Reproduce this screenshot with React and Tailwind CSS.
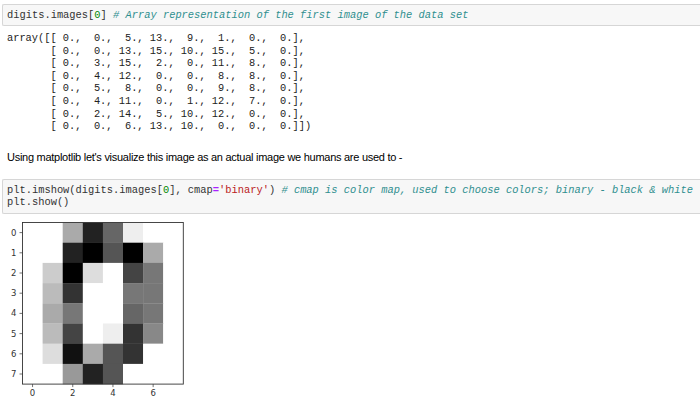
const rows = [
  [0,0,5,13,9,1,0,0],
  [0,0,13,15,10,15,5,0],
  [0,3,15,2,0,11,8,0],
  [0,4,12,0,0,8,8,0],
  [0,5,8,0,0,9,8,0],
  [0,4,11,0,1,12,7,0],
  [0,2,14,5,10,12,0,0],
  [0,0,6,13,10,0,0,0],
];

function Chart() {
  const cw = 20.1, ch = 20.2, l = 22.5, t = 7.5;
  const grey = (v) => {
    const g = Math.round(255 * (1 - v / 15));
    return `rgb(${g},${g},${g})`;
  };
  return (
    <svg width="200" height="190" viewBox="0 0 200 190" className="block">
      {rows.map((r, y) =>
        r.map((v, x) => (
          <rect key={`${x}-${y}`} x={l + x * cw} y={t + y * ch} width={cw + 0.2} height={ch + 0.2} fill={grey(v)} />
        ))
      )}
      <rect x={l} y={t} width={cw * 8} height={ch * 8} fill="none" stroke="#333" strokeWidth="0.9" />
      {[0,1,2,3,4,5,6,7].map((i) => (
        <g key={i}>
          <line x1={l - 3} x2={l} y1={t + (i + 0.5) * ch} y2={t + (i + 0.5) * ch} stroke="#333" strokeWidth="0.7" />
          <text x={l - 6} y={t + (i + 0.5) * ch + 3} textAnchor="end" fontSize="8.5" fill="#333" fontFamily="DejaVu Sans, sans-serif">{i}</text>
        </g>
      ))}
      {[0,2,4,6].map((i) => (
        <g key={i}>
          <line y1={t + ch * 8} y2={t + ch * 8 + 3} x1={l + (i + 0.5) * cw} x2={l + (i + 0.5) * cw} stroke="#333" strokeWidth="0.7" />
          <text x={l + (i + 0.5) * cw} y={t + ch * 8 + 11.5} textAnchor="middle" fontSize="8.5" fill="#333" fontFamily="DejaVu Sans, sans-serif">{i}</text>
        </g>
      ))}
    </svg>
  );
}

export default function App() {
  return (
    <div className="w-[700px] h-[408px] overflow-hidden bg-white pt-[4px] font-['Liberation_Mono',monospace] text-[10.4px] leading-[12.6px] text-[#333]">
      <div className="ml-[2px] h-[22px] border-y border-l border-[#d6d6d6] bg-[#f7f7f7] pl-[4px] pt-[4px] rounded-l-[2px] whitespace-pre">
        <span>digits.images[</span><span className="text-[#080]">0</span><span>] </span>
        <span className="italic text-[#2f8f8f]"># Array representation of the first image of the data set</span>
      </div>
      <pre className="ml-[7px] mt-[6px] font-['Liberation_Mono',monospace] text-[10.35px] text-[#222]">{`array([[ 0.,  0.,  5., 13.,  9.,  1.,  0.,  0.],
       [ 0.,  0., 13., 15., 10., 15.,  5.,  0.],
       [ 0.,  3., 15.,  2.,  0., 11.,  8.,  0.],
       [ 0.,  4., 12.,  0.,  0.,  8.,  8.,  0.],
       [ 0.,  5.,  8.,  0.,  0.,  9.,  8.,  0.],
       [ 0.,  4., 11.,  0.,  1., 12.,  7.,  0.],
       [ 0.,  2., 14.,  5., 10., 12.,  0.,  0.],
       [ 0.,  0.,  6., 13., 10.,  0.,  0.,  0.]])`}</pre>
      <p className="ml-[7px] mt-[16px] font-['Liberation_Sans',sans-serif] text-[11px] leading-[16px] tracking-[-0.27px] text-black">Using matplotlib let's visualize this image as an actual image we humans are used to -</p>
      <div className="ml-[2px] mt-[14px] h-[35px] border-y border-l border-[#d6d6d6] bg-[#f7f7f7] pl-[4px] pt-[4px] rounded-l-[2px] whitespace-pre">
        <div>
          <span>plt.imshow(digits.images[</span><span className="text-[#080]">0</span><span>], cmap</span><span className="font-bold text-[#a2f]">=</span><span className="text-[#ba2121]">'binary'</span><span>) </span>
          <span className="italic text-[#2f8f8f]"># cmap is color map, used to choose colors; binary - black &amp; white</span>
        </div>
        <div>plt.show()</div>
      </div>
      <div className="mt-[1px]"><Chart /></div>
    </div>
  );
}
